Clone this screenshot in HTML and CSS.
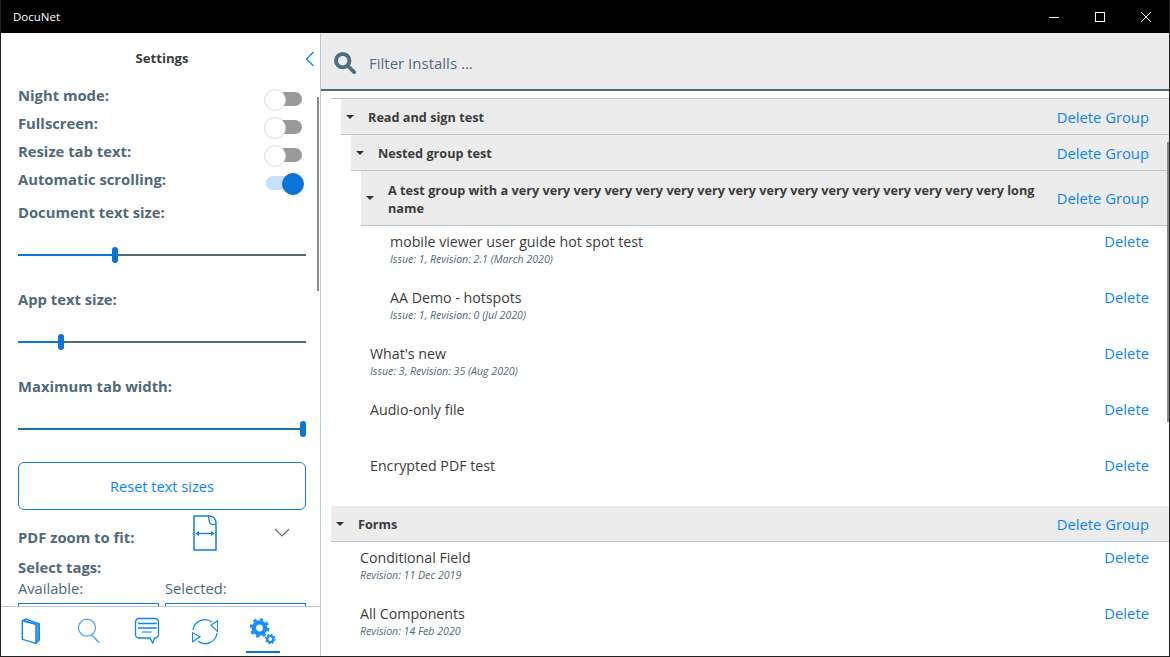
FILE: index.html
```html
<!DOCTYPE html>
<html lang="en">
<head>
<meta charset="utf-8">
<title>DocuNet</title>
<link rel="stylesheet" href="styles.css">
</head>
<body>
<div class="window">
  <header class="titlebar">
    <span class="app-name">DocuNet</span>
    <div class="win-controls">
      <svg class="win-btn" viewBox="0 0 46 33"><path d="M18 17.500h10" stroke="#fff" fill="none"/></svg>
      <svg class="win-btn" viewBox="0 0 46 33"><rect x="18.500" y="12.500" width="9" height="9" stroke="#fff" fill="none"/></svg>
      <svg class="win-btn" viewBox="0 0 46 33"><path d="M18 12l10 10M28 12L18 22" stroke="#fff" fill="none"/></svg>
    </div>
  </header>
  <div class="main">
    <aside class="sidebar">
      <div class="sidebar-head">
        <span class="sidebar-title">Settings</span>
        <svg class="collapse" viewBox="0 0 10 16"><path d="M8.500 1L1.500 8l7 7" fill="none" stroke="#0a84ff" stroke-width="1.300"/></svg>
      </div>
      <div class="settings">
        <div class="toggle-row"><span class="label">Night mode:</span><span class="toggle"></span></div>
        <div class="toggle-row"><span class="label">Fullscreen:</span><span class="toggle"></span></div>
        <div class="toggle-row"><span class="label">Resize tab text:</span><span class="toggle"></span></div>
        <div class="toggle-row"><span class="label">Automatic scrolling:</span><span class="toggle on"></span></div>
        <div class="slider-block">
          <div class="label">Document text size:</div>
          <div class="slider"><span class="fill" style="width:97px"></span><span class="thumb" style="left:94px"></span></div>
        </div>
        <div class="slider-block">
          <div class="label">App text size:</div>
          <div class="slider"><span class="fill" style="width:43px"></span><span class="thumb" style="left:40px"></span></div>
        </div>
        <div class="slider-block">
          <div class="label">Maximum tab width:</div>
          <div class="slider"><span class="fill fill-dim" style="width:282px"></span><span class="thumb" style="left:282px"></span></div>
        </div>
        <button class="reset">Reset text sizes</button>
        <div class="zoom-row">
          <span class="label">PDF zoom to fit:</span>
          <svg class="fit-icon" viewBox="0 0 24 36">
            <path d="M1 1h15.500C21 1 23 5 23 9v26H1z" fill="none" stroke="#0a7cf0" stroke-width="1.500"/>
            <path d="M15.500 1.500c.5 3 .5 5 1.500 6.500s3 2 5.500 1" fill="none" stroke="#0a7cf0" stroke-width="1.200"/>
            <path d="M4 18.500h16" stroke="#0a7cf0" stroke-width="1.300"/>
            <path d="M2.500 18.500l3.500-2.500v5zM21.500 18.500l-3.500-2.500v5z" fill="#0a7cf0"/>
          </svg>
          <svg class="chev" viewBox="0 0 16 9"><path d="M1 1l7 7 7-7" fill="none" stroke="#666" stroke-width="1.100"/></svg>
        </div>
        <div class="label tags-label">Select tags:</div>
        <div class="tag-cols">
          <div class="tag-col"><span class="tag-title">Available:</span><div class="tag-box"></div></div>
          <div class="tag-col"><span class="tag-title">Selected:</span><div class="tag-box"></div></div>
        </div>
      </div>
      <span class="scroll-left"></span>
      <nav class="tabs">
        <svg class="tab" viewBox="0 0 26 28"><path d="M4.300 3.700v18.600L18 26.300v-19z" fill="#fff" stroke="#0a84ff" stroke-width="1.400"/><path d="M4.300 3.700L8 2l13.300 5v16L18 26.300" fill="none" stroke="#0a84ff" stroke-width="1.400"/><path d="M18 7.300l3.300-.3v16L18 26.300z" fill="#0a84ff" fill-opacity=".75"/><path d="M6 3.400l13 4.400" stroke="#0a84ff" stroke-width="1"/></svg>
        <svg class="tab" viewBox="0 0 26 28"><circle cx="11" cy="10.700" r="8.500" fill="none" stroke="#4ca6ff" stroke-width="1.300"/><path d="M15.700 18l7.600 7.700" stroke="#4ca6ff" stroke-width="1.500"/></svg>
        <svg class="tab" viewBox="0 0 26 28"><path d="M5 1.500h16a3.500 3.500 0 0 1 3.500 3.500v12.500a3.500 3.500 0 0 1-3.500 3.500h-.500l-1.800 5L16 21H5a3.500 3.500 0 0 1-3.500-3.500V5A3.500 3.500 0 0 1 5 1.500z" fill="none" stroke="#0a84ff" stroke-width="1.300"/><path d="M4 6.500h18.700M4 11h18.700" stroke="#0a84ff" stroke-width="1.300"/><path d="M7.700 15h10" stroke="#4ca6ff" stroke-width="1.500"/></svg>
        <svg class="tab" viewBox="0 0 26 28"><path d="M1 13A12 12 0 0 1 20 5M25 16A12 12 0 0 1 6 24.300" fill="none" stroke="#0a84ff" stroke-width="1.200"/><path d="M25.700 3.700L19 8l6.700 6.700zM.5 15.700L8 19.700.5 24.700z" fill="#fff" stroke="#0a84ff" stroke-width="1.200"/></svg>
        <svg class="tab" viewBox="0 0 26 28"><g fill="none" stroke="#1a8cff"><circle cx="9.500" cy="11" r="5.600" stroke-width="4.400"/><circle cx="9.500" cy="11" r="8.600" stroke-width="2.400" stroke-dasharray="3.400 3.350"/><circle cx="20.300" cy="22" r="3.100" stroke-width="2.400"/><circle cx="20.300" cy="22" r="4.600" stroke-width="1.400" stroke-dasharray="1.800 1.810"/></g></svg>
        <span class="tab-underline"></span>
      </nav>
    </aside>
    <section class="content">
      <div class="search">
        <svg class="search-icon" viewBox="0 0 24 24"><circle cx="9.500" cy="9.500" r="7.300" fill="none" stroke="#4f6d7f" stroke-width="4.300"/><path d="M15 15l7 7" stroke="#4f6d7f" stroke-width="4" stroke-linecap="round"/></svg>
        <span class="search-text">Filter Installs ...</span>
      </div>
      <div class="list">
        <div class="rule"></div>
        <div class="group lvl2"><span class="caret"></span><span class="group-name">Read and sign test</span><a class="del">Delete Group</a></div>
        <div class="group lvl3"><span class="caret"></span><span class="group-name">Nested group test</span><a class="del">Delete Group</a></div>
        <div class="group lvl4 tall"><span class="caret"></span><span class="group-name">A test group with a very very very very very very very very very very very very very very very very long name</span><a class="del">Delete Group</a></div>
        <div class="item ind-4"><div class="item-text"><div class="item-name">mobile viewer user guide hot spot test</div><div class="item-meta">Issue: 1, Revision: 2.1 (March 2020)</div></div><a class="del">Delete</a></div>
        <div class="item ind-4"><div class="item-text"><div class="item-name">AA Demo - hotspots</div><div class="item-meta">Issue: 1, Revision: 0 (Jul 2020)</div></div><a class="del">Delete</a></div>
        <div class="item ind-2"><div class="item-text"><div class="item-name">What's new</div><div class="item-meta">Issue: 3, Revision: 35 (Aug 2020)</div></div><a class="del">Delete</a></div>
        <div class="item ind-2"><div class="item-text"><div class="item-name">Audio-only file</div></div><a class="del">Delete</a></div>
        <div class="item ind-2"><div class="item-text"><div class="item-name">Encrypted PDF test</div></div><a class="del">Delete</a></div>
        <div class="group lvl1"><span class="caret"></span><span class="group-name">Forms</span><a class="del">Delete Group</a></div>
        <div class="item ind-1"><div class="item-text"><div class="item-name">Conditional Field</div><div class="item-meta">Revision: 11 Dec 2019</div></div><a class="del">Delete</a></div>
        <div class="item ind-1"><div class="item-text"><div class="item-name">All Components</div><div class="item-meta">Revision: 14 Feb 2020</div></div><a class="del">Delete</a></div>
      </div>
      <span class="scroll-right"></span>
    </section>
  </div>
</div>
</body>
</html>
```
FILE: styles.css
```css
* { box-sizing: border-box; }
html, body { margin: 0; height: 100%; overflow: hidden; }
body { font-family: "Open Sans", "Noto Sans", sans-serif; background: #fff; color: #333; }
.window { width: 1170px; height: 657px; display: flex; flex-direction: column; border: 1px solid #222; border-top: 0; }
.titlebar { height: 33px; flex: none; background: #000; color: #fff; display: flex; align-items: center; justify-content: space-between; padding-left: 12px; }
.app-name { font-size: 11.500px; }
.win-controls { display: flex; }
.win-btn { width: 46px; height: 33px; display: block; }
.main { flex: 1; display: flex; min-height: 0; }
.sidebar { width: 320px; flex: none; border-right: 1px solid #b8c8d4; display: flex; flex-direction: column; position: relative; min-height: 0; }
.sidebar-head { height: 48px; flex: none; display: flex; align-items: center; justify-content: center; position: relative; padding: 2px 0 0 3px; }
.sidebar-title { font-size: 13.200px; font-weight: 700; color: #3c3c3c; }
.collapse { position: absolute; right: 5px; top: 18px; width: 10px; height: 16px; }
.settings { flex: 1; min-height: 0; overflow: hidden; padding: 0 14px 0 17px; }
.label { font-size: 14.800px; font-weight: 700; color: #4f6a7a; line-height: 20px; }
.toggle-row { height: 28px; display: flex; justify-content: space-between; align-items: center; }
.toggle { width: 37px; height: 14px; border-radius: 7px; background: #999; position: relative; margin: 8px 4px 0 0; }
.toggle::before { content: ""; position: absolute; left: -1px; top: -3px; width: 20px; height: 20px; border-radius: 50%; background: #fff; border: 1px solid #ddd; }
.toggle.on { background: #c5e1f9; margin: 8px 3px 0 0; }
.toggle.on::before { left: auto; right: -1px; background: #0a74da; border-color: #0a74da; }
.slider-block { height: 87px; padding-top: 9px; }
.slider { height: 2px; background: #4f6a7a; position: relative; margin-top: 32px; }
.fill { display: block; height: 2px; background: #0a78d8; }
.fill-dim { background: #1d6fa8; }
.thumb { position: absolute; top: -7px; width: 6px; height: 16px; border-radius: 3px; background: #0a74da; }
.reset { display: block; width: 288px; height: 48px; margin-top: 8px; border: 1px solid #0a7cf0; border-radius: 6px; background: #fff; color: #0a84ff; font: 14.600px "Open Sans", sans-serif; }
.zoom-row { height: 45px; margin-top: 2px; display: flex; align-items: center; position: relative; }
.zoom-row .label { padding-top: 4px; }
.fit-icon { position: absolute; left: 175px; top: 3px; width: 24px; height: 36px; }
.chev { position: absolute; left: 256px; top: 16px; width: 16px; height: 9px; }
.tag-cols { display: flex; gap: 6px; padding-top: 1px; }
.tag-col { width: 141px; }
.tag-title { display: block; font-size: 14.700px; line-height: 20px; color: #4f6a7a; }
.tag-box { height: 30px; margin-top: 5px; border: 1px solid #0a7cf0; }
.scroll-left { position: absolute; right: 1px; top: 64px; width: 2px; height: 194px; background: #8a8a8a; }
.tabs { height: 50px; flex: none; border-top: 1px solid #b8c8d4; display: flex; gap: 32px; padding: 10px 0 0 17px; position: relative; background: #fff; }
.tab { width: 26px; height: 28px; display: block; flex: none; }
.tab-underline { position: absolute; left: 245px; bottom: 3px; width: 34px; height: 2px; background: #0a74da; }
.content { flex: 1; min-width: 0; display: flex; flex-direction: column; position: relative; }
.search { height: 58px; flex: none; background: #ececec; border-bottom: 2px solid #4f6a7a; display: flex; align-items: center; padding-left: 13px; }
.search-icon { width: 22px; height: 22px; margin-top: 3px; }
.search-text { margin: 3px 0 0 13px; font-size: 15px; color: #4f6d7f; }
.list { flex: 1; min-height: 0; overflow: hidden; padding-top: 7px; }
.rule { height: 1px; margin-left: 10px; background: #b8c8d4; }
.group { display: flex; align-items: center; background: #ececec; border-bottom: 1px solid #b8c8d4; height: 36px; padding-right: 20px; }
.group.tall { height: 55px; }
.lvl1 { margin-left: 10px; }
.lvl2 { margin-left: 20px; }
.lvl3 { margin-left: 30px; }
.lvl4 { margin-left: 40px; }
.caret { width: 0; height: 0; flex: none; margin: 0 14px 0 5px; border-left: 4px solid transparent; border-right: 4px solid transparent; border-top: 4px solid #333; }
.group-name { flex: 1; font-size: 12.700px; font-weight: 700; color: #3c3c3c; line-height: 18px; padding: 1px 18px 0 0; }
.del { font-size: 14.800px; color: #0a84ff; flex: none; }
.item .del { margin-top: -1px; }
.item { height: 56px; display: flex; justify-content: space-between; padding-right: 20px; padding-top: 6px; line-height: 20px; }
.ind-1 { padding-left: 39px; }
.ind-2 { padding-left: 49px; }
.ind-4 { padding-left: 69px; }
.item-name { font-size: 14.200px; color: #3c3c3c; }
.item-meta { font-size: 10.600px; font-style: italic; color: #4f6a7a; line-height: 14px; }
.scroll-right { position: absolute; right: 0; top: 109px; width: 2px; height: 280px; background: #8a8a8a; }
```
